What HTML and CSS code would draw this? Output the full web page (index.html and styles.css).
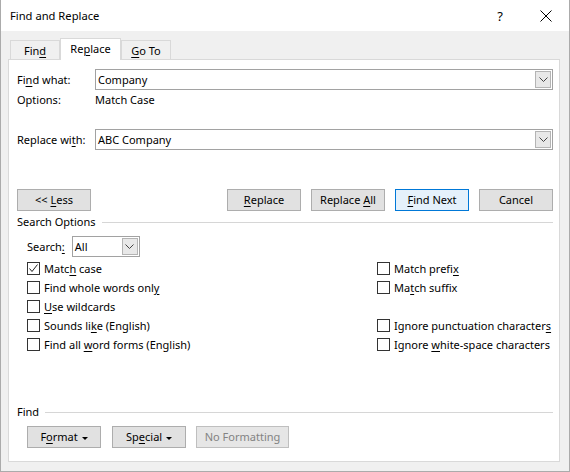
FILE: index.html
```html
<!DOCTYPE html>
<html lang="en">
<head>
    <meta charset="UTF-8">
    <title>Find and Replace</title>
    <link rel="stylesheet" href="styles.css">
</head>
<body>
    <div class="window">
        <div class="titlebar">
            <span class="title">Find and Replace</span>
            <span class="caption-btn">?</span>
            <span class="caption-btn">
                <svg width="12" height="12" viewBox="0 0 12 12"><path d="M0.5 0.5 L11.5 11.5 M11.5 0.5 L0.5 11.5" stroke="#000" stroke-width="1" fill="none"/></svg>
            </span>
        </div>
        <div class="client">
            <div class="tabs">
                <div class="tab">Fin<u>d</u></div>
                <div class="tab active">Re<u>p</u>lace</div>
                <div class="tab"><u>G</u>o To</div>
            </div>
            <div class="panel">
                <!-- find / replace fields -->
                <div class="field">
                    <span class="field-label">Fi<u>n</u>d what:</span>
                    <div class="combo">
                        <span class="combo-text">Company</span>
                        <span class="combo-btn"><svg width="9" height="5" viewBox="0 0 9 5"><polyline points="0.5,0.5 4.5,4.5 8.5,0.5" stroke="#444" fill="none"/></svg></span>
                    </div>
                </div>
                <div class="field options-row">
                    <span class="field-label">Options:</span>
                    <span>Match Case</span>
                </div>
                <div class="field replace-row">
                    <span class="field-label">Replace wi<u>t</u>h:</span>
                    <div class="combo">
                        <span class="combo-text">ABC Company</span>
                        <span class="combo-btn"><svg width="9" height="5" viewBox="0 0 9 5"><polyline points="0.5,0.5 4.5,4.5 8.5,0.5" stroke="#444" fill="none"/></svg></span>
                    </div>
                </div>

                <div class="button-row">
                    <button class="btn">&lt;&lt; <u>L</u>ess</button>
                    <div class="button-group">
                        <button class="btn"><u>R</u>eplace</button>
                        <button class="btn">Replace <u>A</u>ll</button>
                        <button class="btn default"><u>F</u>ind Next</button>
                        <button class="btn">Cancel</button>
                    </div>
                </div>

                <!-- search options -->
                <div class="group-heading"><span>Search Options</span><span class="rule"></span></div>
                <div class="search-row">
                    <span>Search<u>:</u></span>
                    <div class="combo small">
                        <span class="combo-text">All</span>
                        <span class="combo-btn"><svg width="9" height="5" viewBox="0 0 9 5"><polyline points="0.5,0.5 4.5,4.5 8.5,0.5" stroke="#444" fill="none"/></svg></span>
                    </div>
                </div>
                <div class="checks">
                    <label class="check"><span class="box"><svg width="11" height="11" viewBox="0 0 11 11"><polyline points="1.5,5.5 4,8.5 9.5,1.5" stroke="#222" fill="none"/></svg></span><span>Matc<u>h</u> case</span></label>
                    <label class="check"><span class="box"></span><span>Match prefi<u>x</u></span></label>
                    <label class="check"><span class="box"></span><span>Find whole words onl<u>y</u></span></label>
                    <label class="check"><span class="box"></span><span>Ma<u>t</u>ch suffix</span></label>
                    <label class="check"><span class="box"></span><span><u>U</u>se wildcards</span></label>
                    <span></span>
                    <label class="check"><span class="box"></span><span>Sounds li<u>k</u>e (English)</span></label>
                    <label class="check"><span class="box"></span><span>Ignore punctuation character<u>s</u></span></label>
                    <label class="check"><span class="box"></span><span>Find all <u>w</u>ord forms (English)</span></label>
                    <label class="check"><span class="box"></span><span>Ignore <u>w</u>hite-space characters</span></label>
                </div>

                <!-- find formatting -->
                <div class="find-section">
                    <div class="group-heading"><span>Find</span><span class="rule"></span></div>
                    <div class="format-row">
                        <button class="btn">F<u>o</u>rmat <span class="caret"></span></button>
                        <button class="btn">Sp<u>e</u>cial <span class="caret"></span></button>
                        <button class="btn wide" disabled>No Formatting</button>
                    </div>
                </div>
            </div>
        </div>
    </div>
</body>
</html>
```

FILE: styles.css
```css
body {
    margin: 0;
    font-family: "Noto Sans", "Open Sans", sans-serif;
    font-size: 11px;
    color: #000;
    background-color: #fff;
}
u {
    text-underline-offset: 2px;
}
.window {
    width: 570px;
    height: 472px;
    box-sizing: border-box;
    border: 1px solid #ababab;
    border-top: none;
    display: flex;
    flex-direction: column;
}
.titlebar {
    height: 31px;
    display: flex;
    align-items: center;
    background-color: #fff;
    font-size: 11.2px;
}
.title {
    flex: 1;
    padding-left: 9px;
}
.caption-btn {
    width: 46px;
    height: 31px;
    display: flex;
    align-items: center;
    justify-content: center;
    font-size: 13px;
}
.client {
    flex: 1;
    display: flex;
    flex-direction: column;
    background-color: #f0f0f0;
    padding: 7px 9px 9px 7px;
}
.tabs {
    display: flex;
    align-items: flex-end;
    height: 21px;
    padding-left: 2px;
}
.tab {
    box-sizing: border-box;
    height: 19px;
    width: 50px;
    border: 1px solid #d9d9d9;
    border-bottom: none;
    display: flex;
    align-items: center;
    justify-content: center;
    background-color: #f0f0f0;
}
.tab.active {
    width: 61px;
    height: 22px;
    margin-bottom: -1px;
    background-color: #fff;
    position: relative;
    z-index: 1;
    padding-bottom: 2px;
}
.panel {
    flex: 1;
    display: flex;
    flex-direction: column;
    background-color: #fff;
    border: 1px solid #d9d9d9;
    padding: 9px 6px 13px 8px;
}
.field {
    display: flex;
    align-items: center;
}
.field-label {
    width: 78px;
}
.options-row {
    height: 19px;
    padding-bottom: 1px;
    box-sizing: border-box;
}
.replace-row {
    margin-top: 20px;
}
.combo {
    flex: 1;
    height: 21px;
    box-sizing: border-box;
    border: 1px solid #a2a2a2;
    display: flex;
    align-items: center;
}
.combo-text {
    flex: 1;
    padding-left: 2px;
    padding-bottom: 1px;
}
.combo-btn {
    width: 16px;
    height: 17px;
    margin-right: 1px;
    border: 1px solid #b4b4b4;
    box-sizing: border-box;
    background-color: #e8e8e8;
    display: flex;
    align-items: center;
    justify-content: center;
}
.combo.small {
    flex: none;
    width: 68px;
    margin-left: 7px;
}
.button-row {
    display: flex;
    margin-top: 39px;
}
.button-group {
    margin-left: auto;
    display: flex;
    gap: 10px;
}
.btn {
    width: 74px;
    height: 22px;
    box-sizing: border-box;
    border: 1px solid #adadad;
    background-color: #e1e1e1;
    font-family: inherit;
    font-size: 11px;
    color: #000;
    padding: 0 0 1px 0;
}
.btn.default {
    border-color: #0078d7;
    background-color: #e5f1fb;
}
.btn:disabled {
    color: #838383;
    border-color: #bfbfbf;
    background-color: #e6e6e6;
}
.group-heading {
    display: flex;
    align-items: center;
    height: 22px;
}
.group-heading span:first-child {
    margin-top: -2px;
}
.rule {
    flex: 1;
    margin-left: 6px;
    border-top: 1px solid #d6d6d6;
}
.search-row {
    display: flex;
    align-items: center;
    margin-top: 3px;
    padding-left: 10px;
}
.checks {
    display: grid;
    grid-template-columns: 350px 1fr;
    grid-auto-rows: 19px;
    margin-top: 2px;
    padding-left: 10px;
}
.check {
    display: flex;
    align-items: center;
    gap: 4px;
    white-space: nowrap;
}
.check span:last-child {
    margin-top: -1px;
}
.box {
    width: 13px;
    height: 13px;
    box-sizing: border-box;
    border: 1px solid #333;
    background-color: #fff;
    display: flex;
    align-items: center;
    justify-content: center;
}
.find-section {
    margin-top: auto;
}
.format-row {
    display: flex;
    gap: 11px;
    margin-top: 3px;
    padding-left: 10px;
}
.btn.wide {
    width: 93px;
    margin-left: -1px;
}
.caret {
    display: inline-block;
    width: 0;
    height: 0;
    border-left: 3px solid transparent;
    border-right: 3px solid transparent;
    border-top: 3px solid #000;
    vertical-align: middle;
    margin-left: 1px;
}
```
